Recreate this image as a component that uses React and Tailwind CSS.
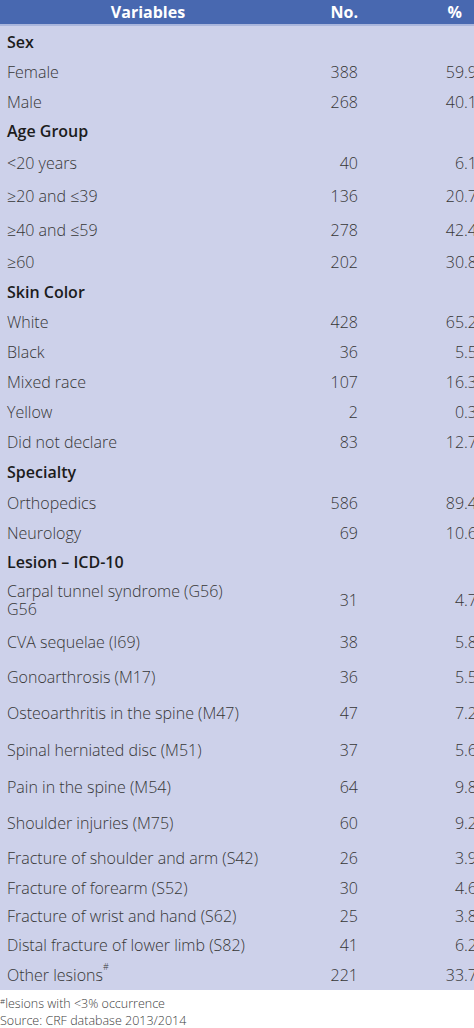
import React from "react";

const rows = [
  { t: "Sex", h: "h-[30px]", b: true },
  { t: "Female", n: "388", p: "59.9", h: "h-[30px]" },
  { t: "Male", n: "268", p: "40.1", h: "h-[29px]" },
  { t: "Age Group", h: "h-[30px]", b: true },
  { t: "<20 years", n: "40", p: "6.1", h: "h-[33px]" },
  { t: "≥20 and ≤39", n: "136", p: "20.7", h: "h-[34px]" },
  { t: "≥40 and ≤59", n: "278", p: "42.4", h: "h-[33px]" },
  { t: "≥60", n: "202", p: "30.8", h: "h-[31px]" },
  { t: "Skin Color", h: "h-[30px]", b: true },
  { t: "White", n: "428", p: "65.2", h: "h-[30px]" },
  { t: "Black", n: "36", p: "5.5", h: "h-[30px]" },
  { t: "Mixed race", n: "107", p: "16.3", h: "h-[30px]" },
  { t: "Yellow", n: "2", p: "0.3", h: "h-[30px]" },
  { t: "Did not declare", n: "83", p: "12.7", h: "h-[30px]" },
  { t: "Specialty", h: "h-[30px]", b: true },
  { t: "Orthopedics", n: "586", p: "89.4", h: "h-[31px]" },
  { t: "Neurology", n: "69", p: "10.6", h: "h-[30px]" },
  { t: "Lesion – ICD-10", h: "h-[28px]", b: true },
  { t: "Carpal tunnel syndrome (G56)", t2: "G56", n: "31", p: "4.7", h: "h-[48px]" },
  { t: "CVA sequelae (I69)", n: "38", p: "5.8", h: "h-[36px]" },
  { t: "Gonoarthrosis (M17)", n: "36", p: "5.5", h: "h-[34px]" },
  { t: "Osteoarthritis in the spine (M47)", n: "47", p: "7.2", h: "h-[37px]" },
  { t: "Spinal herniated disc (M51)", n: "37", p: "5.6", h: "h-[37px]" },
  { t: "Pain in the spine (M54)", n: "64", p: "9.8", h: "h-[37px]" },
  { t: "Shoulder injuries (M75)", n: "60", p: "9.2", h: "h-[36px]" },
  { t: "Fracture of shoulder and arm (S42)", n: "26", p: "3.9", h: "h-[33px]" },
  { t: "Fracture of forearm (S52)", n: "30", p: "4.6", h: "h-[27px]" },
  { t: "Fracture of wrist and hand (S62)", n: "25", p: "3.8", h: "h-[29px]" },
  { t: "Distal fracture of lower limb (S82)", n: "41", p: "6.2", h: "h-[29px]" },
  { t: "Other lesions", sup: "#", n: "221", p: "33.7", h: "h-[31px]" },
];

export default function App() {
  return (
    <div
      className="w-[474px] h-[1028px] overflow-hidden bg-white"
      style={{ fontFamily: '"Open Sans", "Liberation Sans", sans-serif' }}
    >
      <div className="w-[478px]">
        <div className="grid grid-cols-[296px_62px_119px] h-[24px] items-center bg-[#4868b0] text-white font-bold text-[16px]">
          <div className="text-center">Variables</div>
          <div className="text-right">No.</div>
          <div className="text-right pr-[15px]">%</div>
        </div>
        <div className="h-[2px] bg-[#aab6dc]" />
        <div className="bg-[#cdd1ea] pt-[1px]">
          {rows.map((r, i) => (
            <div
              key={i}
              className={`grid grid-cols-[296px_62px_119px] items-center ${r.h} text-[16px] leading-[18px]`}
            >
              <div
                className={`pl-[7px] ${
                  r.b ? "font-semibold text-[#1c1c1c]" : "font-light text-[#363636]"
                }`}
              >
                <div>
                  {r.t}
                  {r.sup && <sup className="text-[9px] align-super">{r.sup}</sup>}
                </div>
                {r.t2 && <div>{r.t2}</div>}
              </div>
              <div className="text-right font-light text-[#363636]">{r.n}</div>
              <div className="text-right font-light text-[#363636]">{r.p}</div>
            </div>
          ))}
        </div>
        <div className="pt-[5px] text-[12.5px] leading-[17px] font-light text-[#404040]">
          <div>
            <sup className="text-[8px]">#</sup>lesions with &lt;3% occurrence
          </div>
          <div>Source: CRF database 2013/2014</div>
        </div>
      </div>
    </div>
  );
}
